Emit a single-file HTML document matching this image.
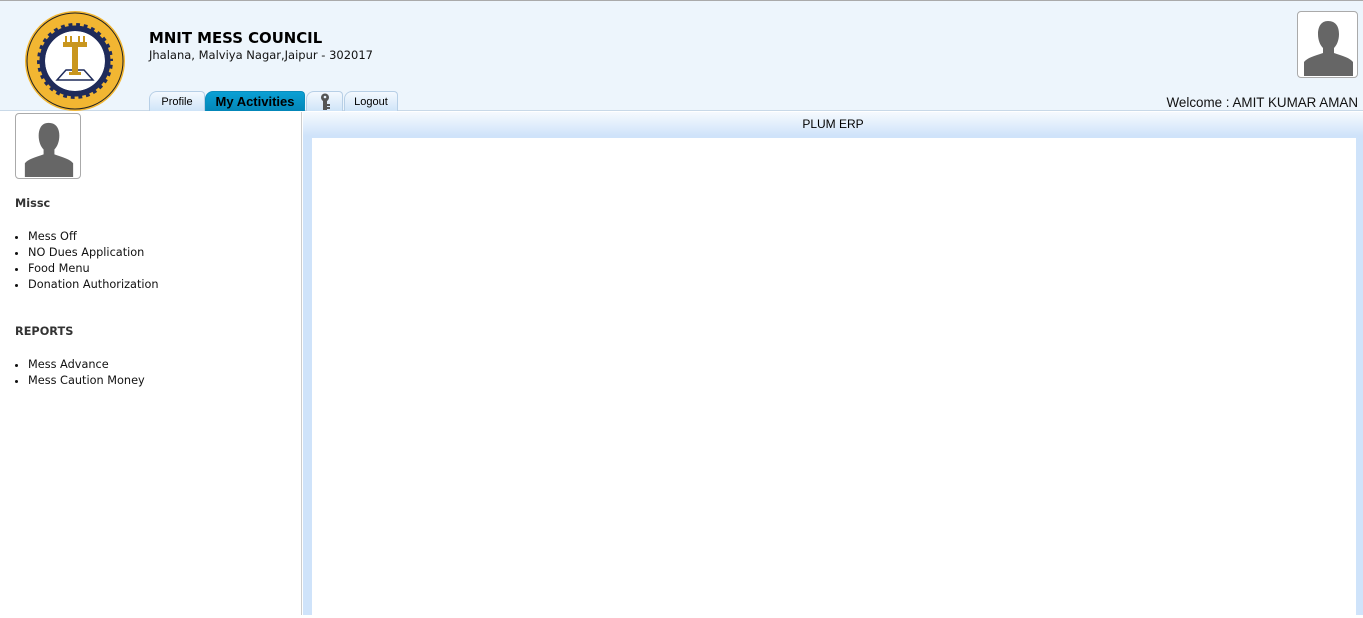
<!DOCTYPE html>
<html><head><meta charset="utf-8"><style>
*{margin:0;padding:0;box-sizing:border-box}
body{width:1363px;height:615px;overflow:hidden;background:#fff;font-family:"DejaVu Sans","Liberation Sans",sans-serif;position:relative}
.hdr{position:absolute;left:0;top:0;width:1363px;height:111px;background:#edf5fc;border-top:1px solid #aaa;border-bottom:1px solid #c9d9e8}
.title{position:absolute;left:149px;top:28px;font:bold 14.9px "DejaVu Sans",sans-serif;color:#000}
.addr{position:absolute;left:149px;top:47px;font-size:11.5px;color:#111}
.tab{position:absolute;top:90px;height:20px;font:11px "Liberation Sans",sans-serif;text-align:center;line-height:20px;color:#000;background:linear-gradient(#f4f9fe,#cfe4f8);border:1px solid #b7cfe6;border-bottom:none;border-radius:8px 4px 0 0}
.tab.act{background:linear-gradient(#0aa0d4,#0386b8);border-color:#0a8dbd;font:bold 13px "Liberation Sans",sans-serif;line-height:19px}
.av{position:absolute;border:1px solid #aaa;border-radius:4px;background:#fff;overflow:hidden}
.welcome{position:absolute;right:5px;top:94px;font:13.4px "Liberation Sans",sans-serif;color:#111}
.left{position:absolute;left:0;top:112px;width:302px;height:503px;border-right:1px solid #ccc}
.left h3{position:absolute;left:15px;font-size:11.3px;font-weight:bold;color:#333}
.left ul{position:absolute;left:28px;font-size:11.3px;line-height:16px;color:#111}
.right{position:absolute;left:303px;top:112px;width:1060px;height:503px;background:#cfe3fa}
.rh{height:24px;background:linear-gradient(#f6fafe,#cfe3fa);text-align:center;font:12px "Liberation Sans",sans-serif;line-height:24px;color:#000}
.rb{position:absolute;left:9px;top:26px;width:1044px;height:480px;background:#fff}
</style></head><body>
<div class="hdr">
<svg style="position:absolute;left:24px;top:9px" width="102" height="102" viewBox="0 0 102 102">
<circle cx="51" cy="51" r="50" fill="#f2b632"/>
<circle cx="51" cy="51" r="48" fill="none" stroke="#222" stroke-width="1"/>
<circle cx="51" cy="51" r="38" fill="#1f2b5a"/>
<circle cx="51" cy="51" r="38" fill="none" stroke="#f2b632" stroke-width="5" stroke-dasharray="4 4"/>
<circle cx="51" cy="51" r="30" fill="#fff"/>
<circle cx="51" cy="51" r="31" fill="none" stroke="#1f2b5a" stroke-width="2"/>
<path d="M33 70 L69 70 L60 60 L42 60Z" fill="none" stroke="#1f2b5a" stroke-width="1.5"/>
<path d="M49 35h4v27h-4z M40 33h22v3h-22z M42 26v7 M47 26v7 M55 26v7 M60 26v7" stroke="#c9961e" stroke-width="2" fill="#c9961e"/>
<path d="M45 62h12v3h-12z" fill="#c9961e"/>
</svg>
<div class="title">MNIT MESS COUNCIL</div>
<div class="addr">Jhalana, Malviya Nagar,Jaipur - 302017</div>
<div class="tab" style="left:149px;width:56px">Profile</div>
<div class="tab act" style="left:205px;width:100px">My Activities</div>
<div class="tab" style="left:306px;width:37px"><svg width="14" height="18" viewBox="0 0 14 18" style="margin-top:1px"><circle cx="7" cy="4.5" r="4" fill="#555"/><rect x="5" y="7" width="4" height="10" fill="#555"/><rect x="9" y="11" width="3" height="2" fill="#555"/><rect x="9" y="14" width="3" height="2" fill="#555"/><circle cx="7" cy="4" r="1.3" fill="#e8f2fc"/></svg></div>
<div class="tab" style="left:344px;width:54px">Logout</div>
<div class="av" style="left:1297px;top:10px;width:61px;height:67px"><svg width="61" height="67" viewBox="0 0 61 67"><path d="M30 9c8 0 11 6 11 13 0 6-2 11-5 14v5c9 3 16 5 19 9v14H6V50c3-4 10-6 19-9v-5c-3-3-5-8-5-14 0-7 3-13 10-13z" fill="#666"/></svg></div>
<div class="welcome">Welcome : AMIT KUMAR AMAN</div>
</div>
<div class="left">
<div class="av" style="left:15px;top:1px;width:66px;height:66px"><svg width="66" height="66" viewBox="0 0 61 67"><path d="M30 9c8 0 11 6 11 13 0 6-2 11-5 14v5c9 3 16 5 19 9v14H6V50c3-4 10-6 19-9v-5c-3-3-5-8-5-14 0-7 3-13 10-13z" fill="#666"/></svg></div>
<h3 style="top:85px">Missc</h3>
<ul style="top:117px"><li>Mess Off</li><li>NO Dues Application</li><li>Food Menu</li><li>Donation Authorization</li></ul>
<h3 style="top:213px">REPORTS</h3>
<ul style="top:245px"><li>Mess Advance</li><li>Mess Caution Money</li></ul>
</div>
<div class="right"><div class="rh">PLUM ERP</div><div class="rb"></div></div>
</body></html>
